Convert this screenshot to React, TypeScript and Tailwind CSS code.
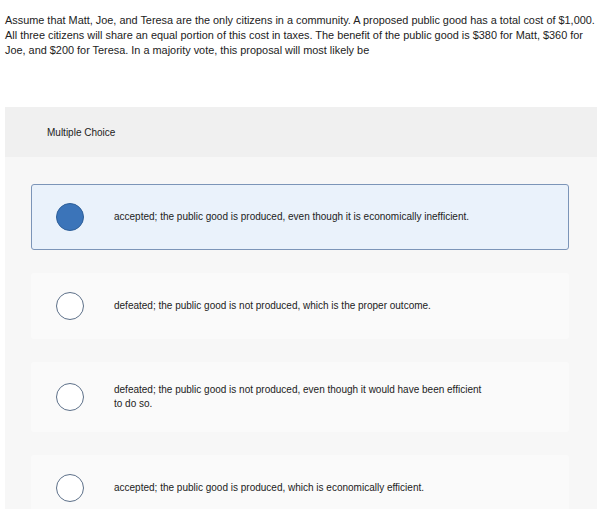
const OPTIONS = [
  ['accepted; the public good is produced, even though it is economically inefficient.'],
  ['defeated; the public good is not produced, which is the proper outcome.'],
  ['defeated; the public good is not produced, even though it would have been efficient', 'to do so.'],
  ['accepted; the public good is produced, which is economically efficient.'],
]

export default function App() {
  const selected = 0
  return (
    <div
      className="h-[509px] overflow-hidden bg-white text-[#222]"
      style={{ fontFamily: '"Liberation Sans", Arial, sans-serif' }}
    >
      <p className="px-[5px] pt-[13px] text-[10.9px] leading-[15px] whitespace-nowrap">
        Assume that Matt, Joe, and Teresa are the only citizens in a community. A proposed public good has a total cost of $1,000.
        <br />
        All three citizens will share an equal portion of this cost in taxes. The benefit of the public good is $380 for Matt, $360 for
        <br />
        Joe, and $200 for Teresa. In a majority vote, this proposal will most likely be
      </p>

      <div className="mt-[49px] ml-[5px] w-[592px] bg-[#f7f7f7]">
        <div className="h-[50px] bg-[#f0f0f0] pl-[42px] flex items-center text-[10px]">Multiple Choice</div>
        <div className="px-[26px] pt-[27px] pb-[20px] flex flex-col gap-[23px]">
          {OPTIONS.map((lines, i) => (
            <div
              key={i}
              className={`w-[538px] min-h-[66px] flex items-center rounded-[3px] border ${
                i === selected ? 'bg-[#eaf2fb] border-[#7c95b8]' : 'bg-[#fafafa] border-transparent'
              }`}
            >
              <div className="ml-[24px] mr-[30px] shrink-0">
                {i === selected ? (
                  <div className="w-[28px] h-[28px] rounded-full bg-[#3b74b9] border border-[#2e5f99]" />
                ) : (
                  <div className="w-[28px] h-[28px] rounded-full bg-white border border-[#5d7089]" />
                )}
              </div>
              <div className="text-[10px] leading-[14px] py-[20px]">
                {lines.map((l, j) => (
                  <div key={j}>{l}</div>
                ))}
              </div>
            </div>
          ))}
        </div>
      </div>
    </div>
  )
}
